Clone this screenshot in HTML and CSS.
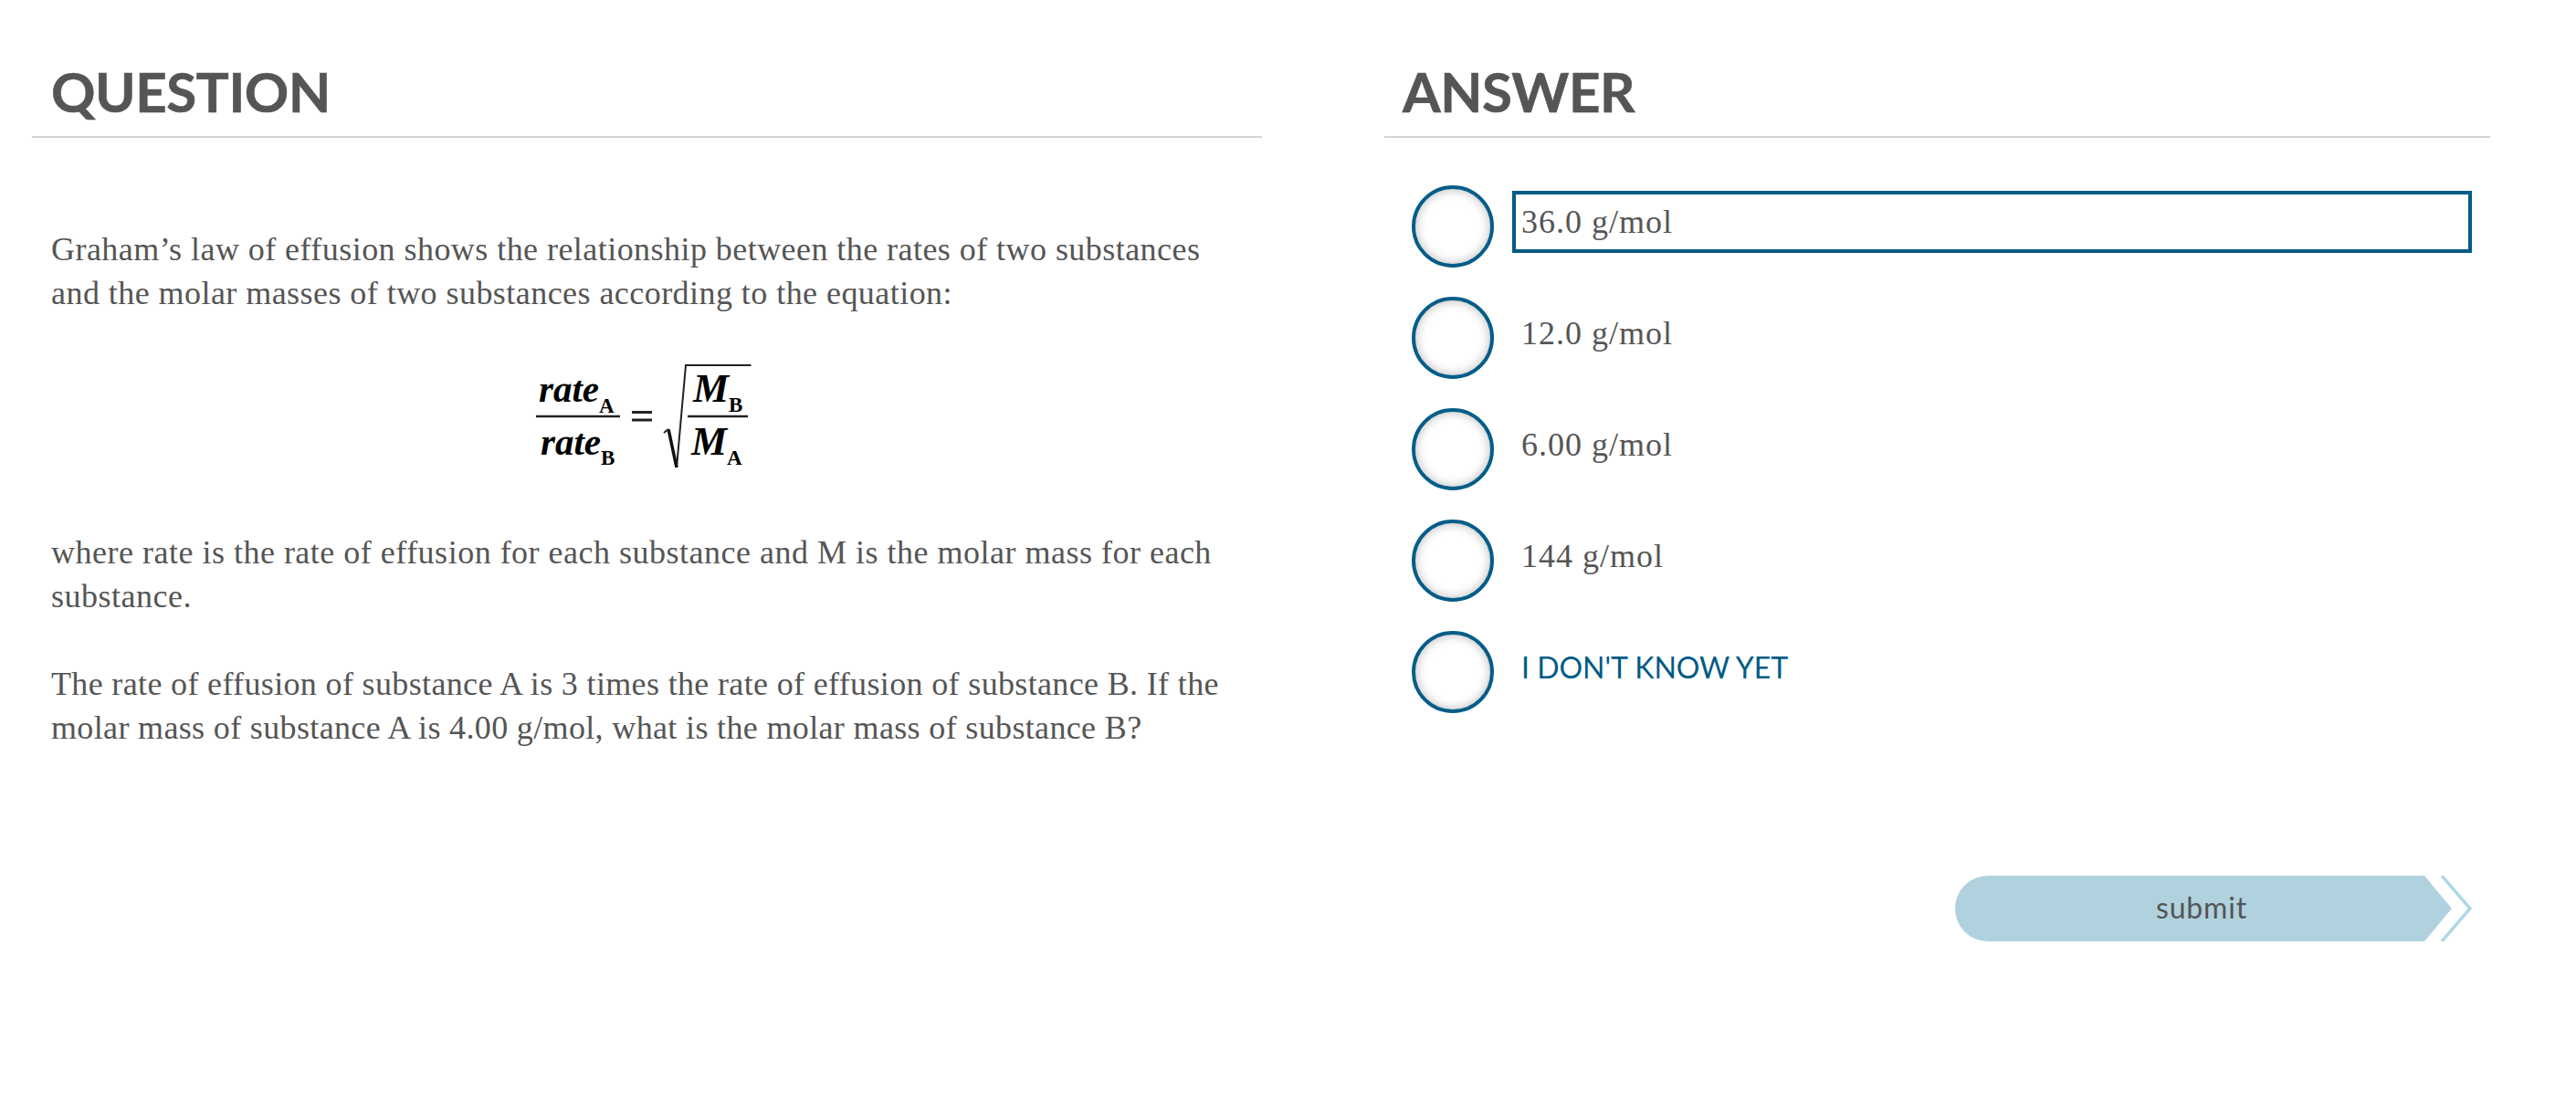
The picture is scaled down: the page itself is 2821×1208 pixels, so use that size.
FILE: index.html
```html
<!DOCTYPE html>
<html lang="en">
<head>
  <meta charset="UTF-8">
  <title>Question</title>
  <link rel="stylesheet" href="styles.css">
</head>
<body>
  <div class="page">
    <section class="column question">
      <h2 class="title">QUESTION</h2>
      <div class="question-body">
        <p>Graham’s law of effusion shows the relationship between the rates of two substances and the molar masses of two substances according to the equation:</p>
        <svg class="formula" viewBox="0 0 300 160" width="300" height="160">
          <g class="formula-main">
            <text x="30" y="60">rate</text>
            <text x="32" y="118">rate</text>
          </g>
          <g class="formula-mass">
            <text x="199" y="60">M</text>
            <text x="197" y="118">M</text>
          </g>
          <g class="formula-sub">
            <text x="96" y="72">A</text>
            <text x="98" y="129">B</text>
            <text x="238" y="71">B</text>
            <text x="236" y="129">A</text>
          </g>
          <path class="formula-line" d="M27 76H119M193 76H259"/>
          <path class="formula-equals" d="M132 71.500H154M132 80H154"/>
          <path class="formula-root" d="M167 94L172 90M181 132L191 20H262.500"/>
          <path class="formula-root-thick" d="M172 90L181 132"/>
        </svg>
        <p class="where">where rate is the rate of effusion for each substance and M is the molar mass for each substance.</p>
        <p class="ask">The rate of effusion of substance A is 3 times the rate of effusion of substance B. If the molar mass of substance A is 4.00 g/mol, what is the molar mass of substance B?</p>
      </div>
    </section>

    <section class="column answer">
      <h2 class="title">ANSWER</h2>
      <ul class="options">
        <li class="option"><span class="radio"></span><span class="label selected">36.0 g/mol</span></li>
        <li class="option"><span class="radio"></span><span class="label">12.0 g/mol</span></li>
        <li class="option"><span class="radio"></span><span class="label">6.00 g/mol</span></li>
        <li class="option"><span class="radio"></span><span class="label">144 g/mol</span></li>
        <li class="option"><span class="radio"></span><span class="label dont-know">I DON'T KNOW YET</span></li>
      </ul>
      <div class="actions">
        <button class="submit" type="button">submit</button>
        <svg class="chevron" viewBox="0 0 34 72" width="34" height="72">
          <path d="M1 0L32 36L1 72"/>
        </svg>
      </div>
    </section>
  </div>
</body>
</html>
```

FILE: styles.css
```css
html, body {
  margin: 0;
  padding: 0;
  background: #fff;
}

body {
  color: #555;
  font-family: 'Liberation Serif', serif;
}

.page {
  display: flex;
  height: 1208px;
  padding-left: 35px;
  box-sizing: border-box;
}

.column {
  display: flex;
  flex-direction: column;
}

.question {
  width: 1347px;
  margin-right: 134px;
}

.answer {
  width: 1211px;
}

.title {
  height: 151px;
  box-sizing: border-box;
  margin: 0;
  padding: 61px 0 0 21px;
  border-bottom: 2px solid #d4d4d4;
  font-family: Lato, sans-serif;
  font-size: 60px;
  font-weight: 700;
  line-height: 78px;
  letter-spacing: -0.4px;
  -webkit-text-stroke: 0.6px #555;
}

.answer .title {
  padding-left: 20px;
}

.question-body {
  padding: 98px 0 0 21px;
}

.question-body p {
  margin: 0 0 48px;
  width: 1300px;
  font-size: 36px;
  line-height: 48px;
  letter-spacing: 0.45px;
}

.question-body p.where {
  letter-spacing: 0.5px;
}

.question-body p.ask {
  letter-spacing: 0.35px;
}

.formula {
  display: block;
  margin: -13px 0 41px 504px;
}

.formula-main text {
  font-size: 41px;
  font-weight: 700;
  font-style: italic;
  fill: #000;
}

.formula-mass text {
  font-size: 44px;
  font-weight: 700;
  font-style: italic;
  fill: #000;
}

.formula-sub text {
  font-size: 23px;
  font-weight: 700;
  fill: #000;
}

.formula-line {
  fill: none;
  stroke: #222;
  stroke-width: 2.500;
}

.formula-equals {
  fill: none;
  stroke: #222;
  stroke-width: 3;
}

.formula-root {
  fill: none;
  stroke: #222;
  stroke-width: 2;
}

.formula-root-thick {
  fill: none;
  stroke: #111;
  stroke-width: 3.500;
}

.options {
  list-style: none;
  margin: 0;
  padding: 52px 0 0 30px;
}

.option {
  display: flex;
  align-items: flex-start;
  gap: 20px;
  height: 122px;
}

.radio {
  flex: none;
  width: 90px;
  height: 90px;
  box-sizing: border-box;
  border: 4.500px solid #055d88;
  border-radius: 50%;
  background: #fff;
  box-shadow: inset 0 0 12px rgba(0, 0, 0, 0.28);
  filter: blur(0.7px);
}

.label {
  box-sizing: border-box;
  width: 1051px;
  height: 68px;
  margin-top: 6px;
  padding: 3px 6px;
  border: 4px solid transparent;
  font-size: 36px;
  line-height: 54px;
  letter-spacing: 1px;
}

.label.selected {
  border-color: #005b85;
}

.label.dont-know {
  color: #005b85;
  font-family: Lato, sans-serif;
  font-size: 32px;
  letter-spacing: 0;
}

.actions {
  display: flex;
  justify-content: flex-end;
  margin: 146px 20px 0 0;
}

.submit {
  width: 544px;
  height: 72px;
  margin-right: -12px;
  padding: 0 4px 3px 0;
  border: 0;
  background: #b0d2df;
  clip-path: path('M36 0H514L544 36L514 72H36A36 36 0 0 1 36 0Z');
  color: #555;
  font-family: Lato, sans-serif;
  font-size: 32px;
  letter-spacing: 0.8px;
}

.chevron {
  flex: none;
}

.chevron path {
  fill: none;
  stroke: #b0d8e6;
  stroke-width: 3.500;
}
```
